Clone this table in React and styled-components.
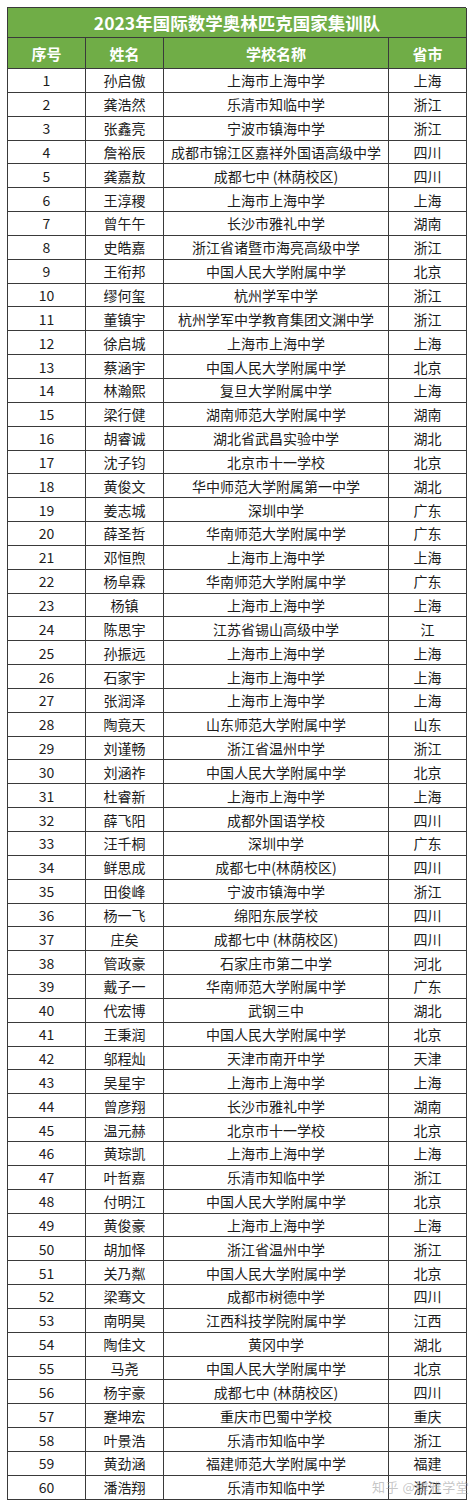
import React from "react";
import styled, { createGlobalStyle } from "styled-components";

const rows = [
  ["孙启傲", "上海市上海中学", "上海"],
  ["龚浩然", "乐清市知临中学", "浙江"],
  ["张鑫亮", "宁波市镇海中学", "浙江"],
  ["詹裕辰", "成都市锦江区嘉祥外国语高级中学", "四川"],
  ["龚嘉敖", "成都七中 (林荫校区)", "四川"],
  ["王淳稷", "上海市上海中学", "上海"],
  ["曾午午", "长沙市雅礼中学", "湖南"],
  ["史皓嘉", "浙江省诸暨市海亮高级中学", "浙江"],
  ["王衔邦", "中国人民大学附属中学", "北京"],
  ["缪何玺", "杭州学军中学", "浙江"],
  ["董镇宇", "杭州学军中学教育集团文渊中学", "浙江"],
  ["徐启城", "上海市上海中学", "上海"],
  ["蔡涵宇", "中国人民大学附属中学", "北京"],
  ["林瀚熙", "复旦大学附属中学", "上海"],
  ["梁行健", "湖南师范大学附属中学", "湖南"],
  ["胡睿诚", "湖北省武昌实验中学", "湖北"],
  ["沈子钧", "北京市十一学校", "北京"],
  ["黄俊文", "华中师范大学附属第一中学", "湖北"],
  ["姜志城", "深圳中学", "广东"],
  ["薛圣哲", "华南师范大学附属中学", "广东"],
  ["邓恒煦", "上海市上海中学", "上海"],
  ["杨阜霖", "华南师范大学附属中学", "广东"],
  ["杨镇", "上海市上海中学", "上海"],
  ["陈思宇", "江苏省锡山高级中学", "江"],
  ["孙振远", "上海市上海中学", "上海"],
  ["石家宇", "上海市上海中学", "上海"],
  ["张润泽", "上海市上海中学", "上海"],
  ["陶竟天", "山东师范大学附属中学", "山东"],
  ["刘谨畅", "浙江省温州中学", "浙江"],
  ["刘涵祚", "中国人民大学附属中学", "北京"],
  ["杜睿新", "上海市上海中学", "上海"],
  ["薛飞阳", "成都外国语学校", "四川"],
  ["汪千桐", "深圳中学", "广东"],
  ["鲜思成", "成都七中(林荫校区)", "四川"],
  ["田俊峰", "宁波市镇海中学", "浙江"],
  ["杨一飞", "绵阳东辰学校", "四川"],
  ["庄矣", "成都七中 (林荫校区)", "四川"],
  ["管政豪", "石家庄市第二中学", "河北"],
  ["戴子一", "华南师范大学附属中学", "广东"],
  ["代宏博", "武钢三中", "湖北"],
  ["王秉润", "中国人民大学附属中学", "北京"],
  ["邬程灿", "天津市南开中学", "天津"],
  ["吴星宇", "上海市上海中学", "上海"],
  ["曾彦翔", "长沙市雅礼中学", "湖南"],
  ["温元赫", "北京市十一学校", "北京"],
  ["黄琮凯", "上海市上海中学", "上海"],
  ["叶哲嘉", "乐清市知临中学", "浙江"],
  ["付明江", "中国人民大学附属中学", "北京"],
  ["黄俊豪", "上海市上海中学", "上海"],
  ["胡加怿", "浙江省温州中学", "浙江"],
  ["关乃粼", "中国人民大学附属中学", "北京"],
  ["梁骞文", "成都市树德中学", "四川"],
  ["南明昊", "江西科技学院附属中学", "江西"],
  ["陶佳文", "黄冈中学", "湖北"],
  ["马尧", "中国人民大学附属中学", "北京"],
  ["杨宇豪", "成都七中 (林荫校区)", "四川"],
  ["蹇坤宏", "重庆市巴蜀中学校", "重庆"],
  ["叶景浩", "乐清市知临中学", "浙江"],
  ["黄劲涵", "福建师范大学附属中学", "福建"],
  ["潘浩翔", "乐清市知临中学", "浙江"],
];

const GlobalStyle = createGlobalStyle`
  body {
    margin: 0;
    background: #fff;
    font-family: "Noto Sans CJK SC", "Noto Sans", sans-serif;
  }
`;

const Page = styled.div`
  position: relative;
  width: 474px;
  height: 1508px;
  padding: 7px 0 0 7px;
  box-sizing: border-box;
`;

const Sheet = styled.div`
  display: grid;
  grid-template-columns: 78px 78px 225px 78px;
  grid-template-rows: 30px 31px repeat(60, 23.85px);
  width: 459px;
  border-left: 1px solid #3a3a3a;
  border-top: 1px solid #3a3a3a;
  box-sizing: border-box;
`;

const Cell = styled.div`
  display: flex;
  align-items: center;
  justify-content: center;
  box-sizing: border-box;
  border-right: 1px solid #3a3a3a;
  border-bottom: 1px solid #3a3a3a;
  color: #1c1c1c;
  font-size: 14px;
  line-height: 1;
  white-space: nowrap;
`;

const TitleCell = styled(Cell)`
  grid-column: 1 / -1;
  background: #70ad47;
  color: #fff;
  font-size: 17.5px;
  font-weight: 700;
`;

const HeadCell = styled(Cell)`
  background: #70ad47;
  color: #fff;
  font-size: 15px;
  font-weight: 700;
`;

const Watermark = styled.div`
  position: absolute;
  left: 372px;
  top: 1477px;
  font-size: 13px;
  color: rgba(160, 160, 160, 0.6);
  letter-spacing: 0.5px;
  pointer-events: none;
`;

export default function App() {
  return (
    <Page>
      <GlobalStyle />
      <Sheet>
        <TitleCell>2023年国际数学奥林匹克国家集训队</TitleCell>
        <HeadCell>序号</HeadCell>
        <HeadCell>姓名</HeadCell>
        <HeadCell>学校名称</HeadCell>
        <HeadCell>省市</HeadCell>
        {rows.map(([name, school, place], i) => (
          <React.Fragment key={i}>
            <Cell>{i + 1}</Cell>
            <Cell>{name}</Cell>
            <Cell>{school}</Cell>
            <Cell>{place}</Cell>
          </React.Fragment>
        ))}
      </Sheet>
      <Watermark>知乎 @博雅学堂</Watermark>
    </Page>
  );
}
